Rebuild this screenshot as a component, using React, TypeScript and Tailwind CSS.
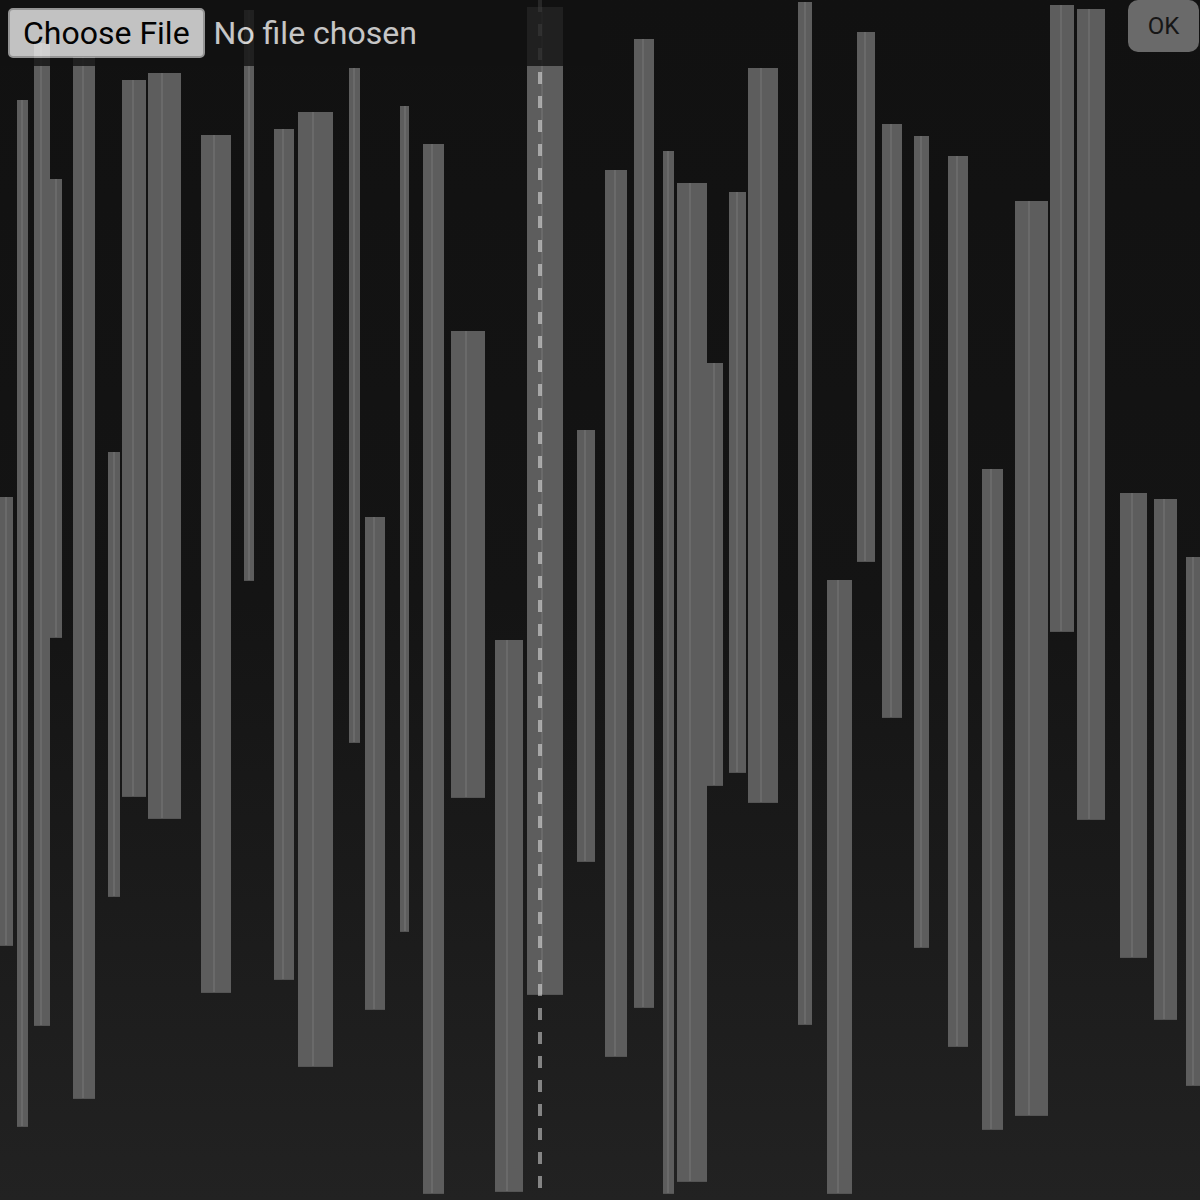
import React from "react";

const bars: [number, number, number, number][] = [
  [0, 13, 497, 946],
  [17, 28, 100, 1127],
  [34, 50, 43, 1026],
  [50, 62, 179, 638],
  [73, 95, 57, 1099],
  [108, 120, 452, 897],
  [122, 146, 80, 797],
  [148, 181, 73, 819],
  [201, 231, 135, 993],
  [244, 254, 10, 581],
  [274, 294, 129, 980],
  [298, 333, 112, 1067],
  [349, 360, 68, 743],
  [365, 385, 517, 1010],
  [400, 409, 106, 932],
  [423, 444, 144, 1194],
  [451, 485, 331, 798],
  [495, 523, 640, 1192],
  [527, 563, 7, 995],
  [577, 595, 430, 862],
  [605, 627, 170, 1057],
  [634, 654, 39, 1008],
  [663, 674, 151, 1194],
  [677, 707, 183, 1182],
  [707, 723, 363, 786],
  [729, 746, 192, 773],
  [748, 778, 68, 803],
  [798, 812, 2, 1025],
  [827, 852, 580, 1194],
  [857, 875, 32, 562],
  [882, 902, 124, 718],
  [914, 929, 136, 948],
  [948, 968, 156, 1047],
  [982, 1003, 469, 1130],
  [1015, 1048, 201, 1116],
  [1050, 1074, 5, 632],
  [1077, 1105, 9, 820],
  [1120, 1147, 493, 958],
  [1154, 1177, 499, 1020],
  [1186, 1200, 557, 1086],
];

export default function App() {
  return (
    <div className="relative w-[1200px] h-[1200px] overflow-hidden bg-gradient-to-b from-[#111111] via-[#141414] to-[#222222] font-['Roboto',sans-serif]">
      <svg
        className="absolute inset-0"
        width={1200}
        height={1200}
        viewBox="0 0 1200 1200"
      >
        {bars.map(([x1, x2, y1, y2], i) => {
          const w = x2 - x1;
          const sx = x1 + Math.round(w * 0.4);
          return (
            <g key={i}>
              <rect x={x1} y={y1} width={w} height={y2 - y1} fill="#5d5d5d" />
              <rect x={sx} y={y1} width={2} height={y2 - y1} fill="#6a6a6a" />
              <rect x={x1} y={y2 - 1} width={w} height={1} fill="#545454" />
            </g>
          );
        })}
        <line
          x1={540}
          y1={0}
          x2={540}
          y2={1200}
          stroke="#ffffff"
          strokeOpacity={0.45}
          strokeWidth={4}
          strokeDasharray="12 12"
        />
      </svg>

      <div className="absolute top-0 left-0 w-[600px] h-[66px] bg-[#111111] opacity-80 pl-[8px] pt-[8px]">
        <input
          type="file"
          className="text-[32px] leading-none text-[#f4f4f4] font-['Roboto',sans-serif] file:font-['Roboto',sans-serif] file:text-[32px] file:leading-[40px] file:text-black file:bg-[#efefef] file:border-2 file:border-solid file:border-[#b5b5b5] file:rounded-[5px] file:px-[13px] file:py-[3px] file:mr-[9px]"
        />
      </div>

      <button className="absolute top-0 right-[1px] w-[71px] h-[52px] rounded-[10px] bg-[#6a6a6a] text-[#161616] text-[24px] font-['Roboto',sans-serif] flex items-center justify-center">
        OK
      </button>
    </div>
  );
}
